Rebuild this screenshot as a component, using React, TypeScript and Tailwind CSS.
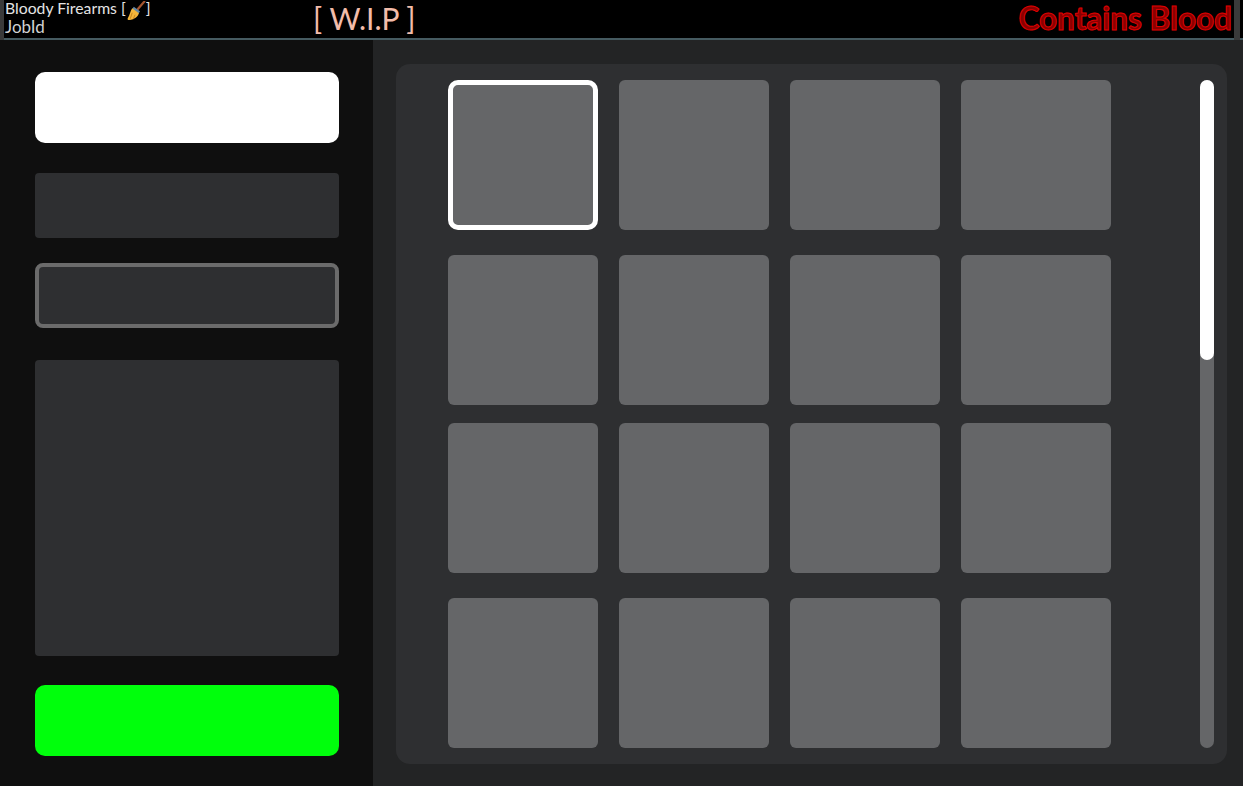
const rows = [
  { id: "a", gap: "" },
  { id: "b", gap: "mt-[25px]" },
  { id: "c", gap: "mt-[18px]" },
  { id: "d", gap: "mt-[25px]" },
];
const cols = [0, 1, 2, 3];

function Broom() {
  return (
    <svg viewBox="0 0 18 18" className="-my-1 inline-block h-[20px] w-[20px] align-[-3px]">
      <path d="M10.5 7.5 16.5 0.5" stroke="#a5552f" strokeWidth="2" strokeLinecap="round" />
      <path d="M7 5.2 12.6 9.2 11.2 11.4 5.6 7.2Z" fill="#5f86a8" />
      <path d="M5.6 6.6 11.6 11C10.8 14 7.6 16.6 3 17.2 1.8 17.3 1 16.6 1.6 15.6 3.4 13 3.8 9 5.6 6.6Z" fill="#f4b63a" />
      <path d="M5.6 10.6 3.8 16M8.2 12.4 6.4 16.4" stroke="#c9851f" strokeWidth="0.9" />
    </svg>
  );
}

export default function App() {
  return (
    <div className="flex h-[786px] w-[1243px] flex-col overflow-hidden bg-[#232425] font-['Lato',sans-serif]">
      <header className="relative flex h-10 shrink-0 border-b-2 border-[#455a60] bg-black">
        <div className="w-[5px] shrink-0" />
        <div className="w-[308px] shrink-0 text-[15.75px] text-[#e4e4e4]">
          <p className="h-4 leading-[16px] whitespace-nowrap">
            Bloody Firearms [<Broom />]
          </p>
          <p className="mt-[2px] text-[17px] leading-[18px] text-[#d2d2d2]">JobId</p>
        </div>
        <p className="text-[30px] leading-[36px] text-[#f2bcaa]">[ W.I.P ]</p>
        <p className="ml-auto pr-[11px] text-[31.5px] leading-[36px] font-bold text-[#8a0000] [-webkit-text-stroke:1px_#e00000]">
          Contains Blood
        </p>
        <div className="absolute top-0 left-0 h-[40px] w-[4px] bg-[#3a3a3a]" />
        <div className="absolute top-0 right-[3px] h-[40px] w-[6px] bg-[#3a3a3a]" />
      </header>
      <div className="flex min-h-0 flex-1">
        <aside className="flex w-[373px] shrink-0 flex-col bg-[#0f0f0f] pt-8 pr-[34px] pl-[35px]">
          <div className="h-[71px] rounded-[10px] bg-white" />
          <div className="mt-[30px] h-[65px] rounded-[4px] bg-[#2e2f31]" />
          <div className="mt-[25px] h-[65px] rounded-[8px] border-4 border-[#6b6b6b] bg-[#2e2f31]" />
          <div className="mt-8 h-[296px] rounded-[4px] bg-[#2e2f31]" />
          <div className="mt-[29px] h-[71px] rounded-[10px] bg-[#00ff0c]" />
        </aside>
        <main className="min-w-0 flex-1 pt-6 pr-4 pl-[23px]">
          <div className="relative h-[700px] overflow-hidden rounded-[14px] bg-[#2e2f31] pt-4 pl-[52px]">
            {rows.map((row) => (
              <div key={row.id} className={`flex gap-[21px] ${row.gap}`}>
                {cols.map((col) =>
                  row.id === "a" && col === 0 ? (
                    <div key={col} className="h-[150px] w-[150px] rounded-[10px] border-[5px] border-white bg-[#656668]" />
                  ) : (
                    <div key={col} className="h-[150px] w-[150px] rounded-[6px] bg-[#656668]" />
                  ),
                )}
              </div>
            ))}
            <div className="absolute top-4 right-[13px] h-[668px] w-[14px] rounded-[7px] bg-[#656668]">
              <div className="h-[280px] rounded-[7px] bg-white" />
            </div>
          </div>
        </main>
      </div>
    </div>
  );
}
